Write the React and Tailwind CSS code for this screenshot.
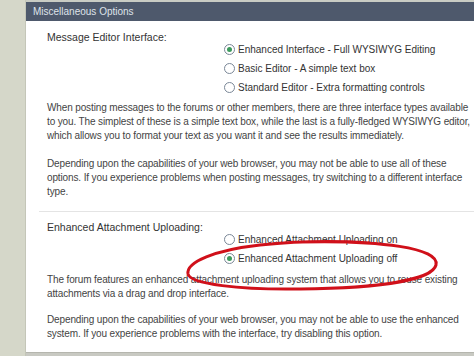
import React from "react";

function Radio({ checked }) {
  return (
    <span className="inline-flex w-[11px] h-[11px] rounded-full border border-[#7a8797] bg-white items-center justify-center shrink-0">
      {checked && <span className="w-[5px] h-[5px] rounded-full bg-[#3c9a5c]" />}
    </span>
  );
}

function Option({ checked, children }) {
  return (
    <div className="flex items-center gap-[3px] h-[19px]">
      <Radio checked={checked} />
      <span className="text-[10px] text-[#333]">{children}</span>
    </div>
  );
}

const para = "pl-[21px] text-[10px] tracking-[-0.13px] leading-[14px] text-[#444] whitespace-nowrap";

export default function App() {
  return (
    <div
      className="w-[474px] h-[356px] bg-[#d5d7c9] flex overflow-hidden relative"
      style={{ fontFamily: '"Liberation Sans", Arial, sans-serif' }}
    >
      <div className="w-[26px] shrink-0 border-r border-[#c4c6b8]" />
      <div className="flex-1 flex flex-col">
        <div className="h-[2px] bg-[#c9ccc4]" />
        <div className="h-[19px] bg-[#4e596c] flex items-center pl-[7px] text-[10px] text-[#dfe3ea]">
          Miscellaneous Options
        </div>
        <div className="bg-white h-[331px] flex flex-col">
          <div className="pl-[21px] pt-[9px] text-[10.5px] text-[#333] leading-[14px]">
            Message Editor Interface:
          </div>
          <div className="pl-[198px] mt-[-4px] flex flex-col">
            <Option checked>Enhanced Interface - Full WYSIWYG Editing</Option>
            <Option>Basic Editor - A simple text box</Option>
            <Option>Standard Editor - Extra formatting controls</Option>
          </div>
          <p className={para + " mt-[4px]"}>
            When posting messages to the forums or other members, there are three interface types available
            <br />
            to you. The simplest of these is a simple text box, while the last is a fully-fledged WYSIWYG editor,
            <br />
            which allows you to format your text as you want it and see the results immediately.
          </p>
          <p className={para + " mt-[14px]"}>
            Depending upon the capabilities of your web browser, you may not be able to use all of these
            <br />
            options. If you experience problems when posting messages, try switching to a different interface
            <br />
            type.
          </p>
          <div className="ml-[13px] mt-[12px] h-[1px] bg-[#e4e4e4]" />
          <div className="pl-[21px] pt-[8px] text-[10.5px] text-[#333] leading-[14px]">
            Enhanced Attachment Uploading:
          </div>
          <div className="pl-[198px] mt-[-4px] flex flex-col">
            <Option>Enhanced Attachment Uploading on</Option>
            <Option checked>Enhanced Attachment Uploading off</Option>
          </div>
          <p className={para + " mt-[5px]"}>
            The forum features an enhanced attachment uploading system that allows you to reuse existing
            <br />
            attachments via a drag and drop interface.
          </p>
          <p className={para + " mt-[12px]"}>
            Depending upon the capabilities of your web browser, you may not be able to use the enhanced
            <br />
            system. If you experience problems with the interface, try disabling this option.
          </p>
        </div>
        <div className="flex-1 bg-[#c8c9c2] border-t border-[#b5b6ae]" />
      </div>
      <svg className="absolute left-0 top-0" width="474" height="356" viewBox="0 0 474 356">
        <path
          d="M 300 242 C 380 240, 440 248, 436 265 C 432 280, 380 288, 300 289 C 240 290, 190 284, 188 274 C 186 262, 215 250, 260 245 C 300 241, 340 241, 370 243"
          fill="none"
          stroke="#d0101a"
          strokeWidth="3"
          strokeLinecap="round"
        />
      </svg>
    </div>
  );
}
